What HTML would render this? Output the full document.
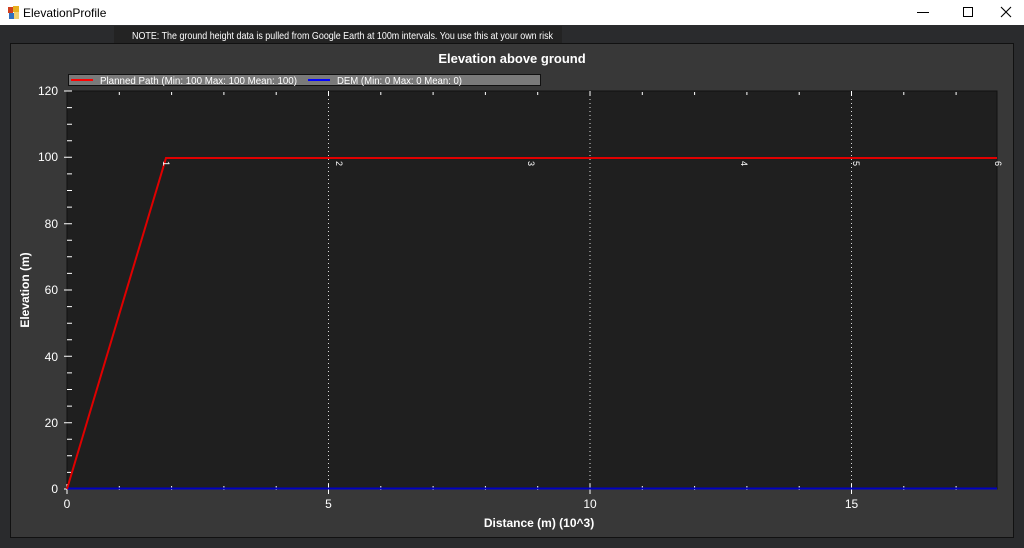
<!DOCTYPE html>
<html><head><meta charset="utf-8"><style>
html,body{margin:0;padding:0;width:1024px;height:548px;overflow:hidden;background:#2a2b2d;font-family:"Liberation Sans",sans-serif;}
</style></head><body>
<svg width="1024" height="548" xmlns="http://www.w3.org/2000/svg" font-family="Liberation Sans, sans-serif">
<rect x="0" y="0" width="1024" height="548" fill="#2a2b2d"/>
<rect x="0" y="0" width="1024" height="25" fill="#ffffff"/>
<rect x="8" y="7" width="5" height="6" fill="#d04020"/>
<rect x="13" y="6" width="6" height="6" fill="#e8b020"/>
<rect x="9" y="13" width="6" height="6" fill="#3070c0"/>
<rect x="14" y="12" width="5" height="7" fill="#f0d070"/>
<text x="23" y="17" font-size="12" fill="#000">ElevationProfile</text>
<line x1="917" y1="12.5" x2="929" y2="12.5" stroke="#000" stroke-width="1"/>
<rect x="963.5" y="7.5" width="9" height="9" fill="none" stroke="#000"/>
<path d="M1001 7 L1011 17 M1011 7 L1001 17" stroke="#000" stroke-width="1.1"/>
<rect x="114" y="26" width="448" height="17" fill="#232323"/>
<text x="132" y="39" font-size="10.5" fill="#fff" textLength="421" lengthAdjust="spacingAndGlyphs">NOTE: The ground height data is pulled from Google Earth at 100m intervals. You use this at your own risk</text>
<rect x="10.5" y="43.5" width="1003" height="494" fill="#383838" stroke="#111" stroke-width="1"/>
<text x="512" y="63" font-size="13" font-weight="bold" fill="#fff" text-anchor="middle">Elevation above ground</text>
<rect x="68.5" y="74.5" width="472" height="11" fill="#7a7a7a" stroke="#111"/>
<line x1="71" y1="80" x2="93" y2="80" stroke="#ff0000" stroke-width="2"/>
<text x="100" y="84" font-size="10" fill="#fff" textLength="197" lengthAdjust="spacingAndGlyphs">Planned Path (Min: 100 Max: 100 Mean: 100)</text>
<line x1="308" y1="80" x2="330" y2="80" stroke="#0000ff" stroke-width="2"/>
<text x="337" y="84" font-size="10" fill="#fff" textLength="125" lengthAdjust="spacingAndGlyphs">DEM (Min: 0 Max: 0 Mean: 0)</text>
<rect x="67" y="91" width="930" height="398" fill="#1f1f1f" stroke="#111"/>
<g stroke="#ddd" stroke-width="1" stroke-dasharray="1,3">
<line x1="328.5" y1="91" x2="328.5" y2="489"/>
<line x1="590" y1="91" x2="590" y2="489"/>
<line x1="851.5" y1="91" x2="851.5" y2="489"/>
</g>
<g stroke="#fff" stroke-width="1">
<path d="M119.3 486v4M171.6 486v4M223.9 486v4M276.2 486v4M380.8 486v4M433.1 486v4M485.4 486v4M537.7 486v4M642.3 486v4M694.6 486v4M746.9 486v4M799.2 486v4M903.8 486v4M956.1 486v4
M119.3 92v3M171.6 92v3M223.9 92v3M276.2 92v3M380.8 92v3M433.1 92v3M485.4 92v3M537.7 92v3M642.3 92v3M694.6 92v3M746.9 92v3M799.2 92v3M903.8 92v3M956.1 92v3"/>
<path d="M328.5 484v10M590 484v10M851.5 484v10M67 484v10 M328.5 91v5M590 91v5M851.5 91v5"/>
<path d="M64 91h8M64 157.3h8M64 223.7h8M64 290h8M64 356.3h8M64 422.7h8M64 489h8"/>
<path d="M67 107.6h5M67 124.2h5M67 140.7h5M67 173.9h5M67 190.5h5M67 207.1h5M67 240.3h5M67 256.8h5M67 273.4h5M67 306.6h5M67 323.2h5M67 339.8h5M67 372.9h5M67 389.5h5M67 406.1h5M67 439.3h5M67 455.8h5M67 472.4h5"/>
</g>
<line x1="67" y1="488.5" x2="997" y2="488.5" stroke="#0000c0" stroke-width="2"/>
<polyline points="67,489 166,158 997,158" fill="none" stroke="#e00000" stroke-width="2"/>
<g font-size="9" fill="#fff">
<text transform="translate(163,161) rotate(90)">1</text>
<text transform="translate(336,161) rotate(90)">2</text>
<text transform="translate(528,161) rotate(90)">3</text>
<text transform="translate(741,161) rotate(90)">4</text>
<text transform="translate(853,161) rotate(90)">5</text>
<text transform="translate(995,161) rotate(90)">6</text>
</g>
<g font-size="12" fill="#fff" text-anchor="end">
<text x="58" y="95">120</text><text x="58" y="161">100</text><text x="58" y="228">80</text>
<text x="58" y="294">60</text><text x="58" y="361">40</text><text x="58" y="427">20</text><text x="58" y="493">0</text>
</g>
<g font-size="12" fill="#fff" text-anchor="middle">
<text x="67" y="508">0</text><text x="328.5" y="508">5</text><text x="590" y="508">10</text><text x="851.5" y="508">15</text>
</g>
<text x="539" y="527" font-size="12" font-weight="bold" fill="#fff" text-anchor="middle">Distance (m) (10^3)</text>
<text transform="translate(29,290) rotate(-90)" font-size="12" font-weight="bold" fill="#fff" text-anchor="middle">Elevation (m)</text>
</svg>
</body></html>
